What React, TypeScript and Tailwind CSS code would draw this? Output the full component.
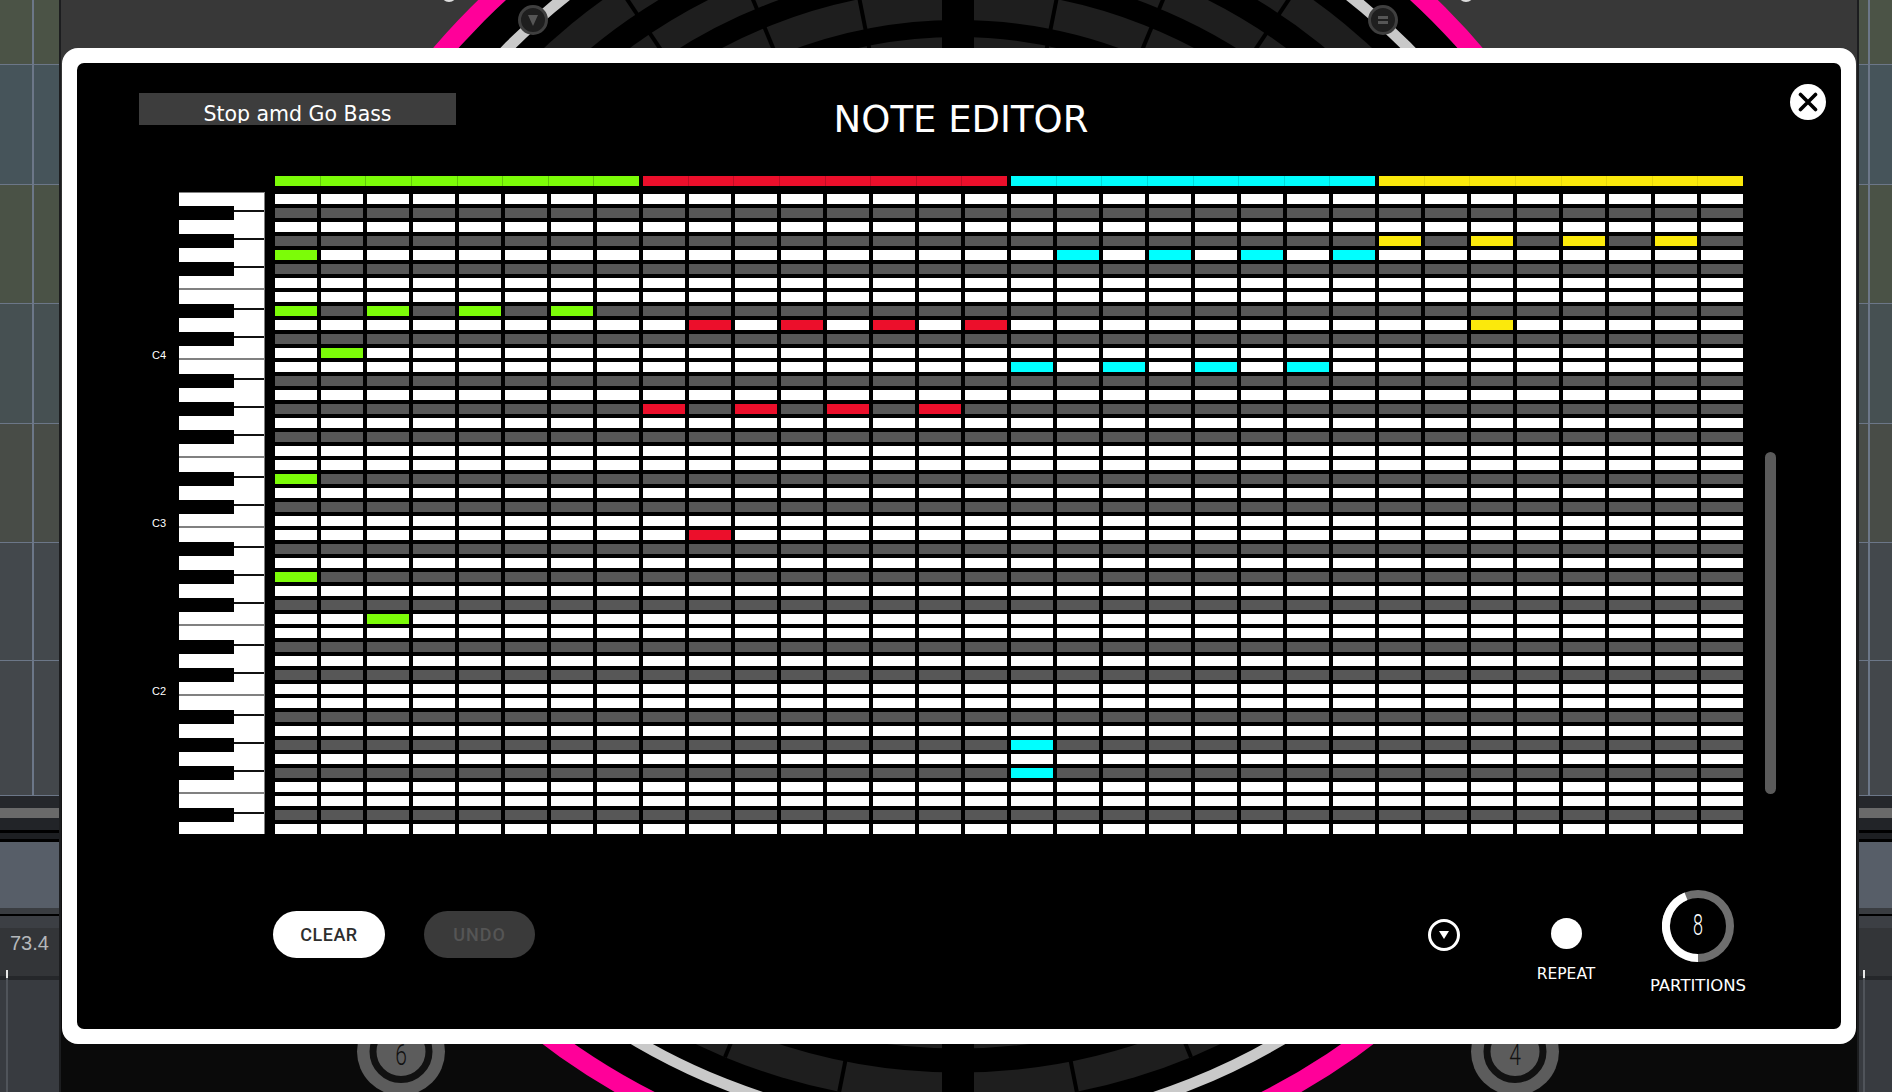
import React from "react";

const ROWS = 46;
const COLS = 32;

const GREEN = "bg-[#7cfc08]";
const RED = "bg-[#ec0f2b]";
const CYAN = "bg-[#00ffff]";
const YELLOW = "bg-[#fbe90c]";

// [row, col, colour]
const NOTES: [number, number, string][] = [
  [4, 0, GREEN], [8, 0, GREEN], [8, 2, GREEN], [8, 4, GREEN], [8, 6, GREEN],
  [11, 1, GREEN], [20, 0, GREEN], [27, 0, GREEN], [30, 2, GREEN],
  [9, 9, RED], [9, 11, RED], [9, 13, RED], [9, 15, RED],
  [15, 8, RED], [15, 10, RED], [15, 12, RED], [15, 14, RED], [24, 9, RED],
  [4, 17, CYAN], [4, 19, CYAN], [4, 21, CYAN], [4, 23, CYAN],
  [12, 16, CYAN], [12, 18, CYAN], [12, 20, CYAN], [12, 22, CYAN],
  [39, 16, CYAN], [41, 16, CYAN],
  [3, 24, YELLOW], [3, 26, YELLOW], [3, 28, YELLOW], [3, 30, YELLOW], [9, 26, YELLOW],
];

const HEADER_GROUPS = [
  { bg: "bg-[#7cfc08]", line: "border-[#62c80a]" },
  { bg: "bg-[#ec0f2b]", line: "border-[#c20d24]" },
  { bg: "bg-[#00ffff]", line: "border-[#00dcdc]" },
  { bg: "bg-[#fbe90c]", line: "border-[#e6d60c]" },
];

// semitones below the C at row 11
const semis = (row: number) => (((row - 11) % 12) + 12) % 12;
const isBlack = (row: number) => [2, 4, 6, 9, 11].includes(semis(row));
const octaveLabel = (row: number) => (row === 11 ? "C4" : row === 23 ? "C3" : row === 35 ? "C2" : "");

const STRIP_BANDS = [
  { h: "h-[65px]", bg: "bg-[#4b5346]" },
  { h: "h-[120px]", bg: "bg-[#46545a]" },
  { h: "h-[119px]", bg: "bg-[#4a5246]" },
  { h: "h-[120px]", bg: "bg-[#465052]" },
  { h: "h-[119px]", bg: "bg-[#484c47]" },
  { h: "h-[118px]", bg: "bg-[#43484c]" },
  { h: "h-[135px]", bg: "bg-[#43474b]" },
];

const Strip = ({ side }: { side: "left" | "right" }) => {
  const left = side === "left";
  return (
    <div className={`relative shrink-0 flex flex-col ${left ? "w-[61px] border-r-2 border-[#1c1d1f]" : "w-[35px] border-l-2 border-[#1c1d1f]"}`}>
      {STRIP_BANDS.map((b, i) => (
        <div key={i} className={`${b.h} ${b.bg} border-b border-[#6c7788] last:border-b-0`} />
      ))}
      <div className={`absolute top-0 h-[796px] w-[2px] bg-[#6c7788] ${left ? "left-[32px]" : "left-[9px]"}`} />
      <div className="h-[12px] bg-[#25272b]" />
      <div className="h-[10px] bg-[#6a6a6a]" />
      <div className="h-[12px] bg-[#222428]" />
      <div className="h-[3px] bg-black" />
      <div className="h-[6px] bg-[#1d1f22]" />
      <div className="h-[3px] bg-black" />
      <div className="h-[66px] bg-[#575e68]" />
      <div className="h-[6px] bg-[#3a3d41]" />
      <div className="h-[2px] bg-black" />
      <div className="h-[12px] bg-[#3c3f44]" />
      <div className="h-[48px] bg-[#333538] flex items-start">
        {left && (
          <span className="ml-[10px] mt-[3px] text-[20px] leading-[24px] text-[#b5b8bb] font-['Liberation_Sans',sans-serif]">
            73.4
          </span>
        )}
      </div>
      <div className="h-[4px] bg-[#25272a]" />
      <div className="flex-1 bg-[#383b40]" />
      <div className={`absolute top-[972px] h-[120px] w-[2px] bg-[#50545a] ${left ? "left-[6px]" : "left-[4px]"}`} />
      <div className={`absolute top-[970px] h-[8px] w-[2px] bg-[#e8e8e8] ${left ? "left-[6px]" : "left-[4px]"}`} />
    </div>
  );
};

const C = { x: 958, y: 494.5 };

const Dial = () => {
  const spokes: { x1: number; y1: number; x2: number; y2: number }[] = [];
  for (let k = 0; k < 32; k++) {
    const a = (k * 11.25 * Math.PI) / 180;
    spokes.push({
      x1: C.x + Math.sin(a) * 330,
      y1: C.y - Math.cos(a) * 330,
      x2: C.x + Math.sin(a) * 609,
      y2: C.y - Math.cos(a) * 609,
    });
  }
  return (
    <svg className="block w-full h-full" viewBox="61 0 1796 1092">
      <circle cx={C.x} cy={C.y} r={670} fill="#000" />
      <circle cx={C.x} cy={C.y} r={679.5} fill="none" stroke="#ff0099" strokeWidth={19} />
      <circle cx={C.x} cy={C.y} r={634} fill="none" stroke="#c9c9c9" strokeWidth={11} />
      <circle cx={C.x} cy={C.y} r={609} fill="#1e1e1e" />
      {spokes.map((s, i) => (
        <line key={i} {...s} stroke="#000" strokeWidth={4} />
      ))}
      <circle cx={C.x} cy={C.y} r={566} fill="none" stroke="#000" strokeWidth={24} />
      <circle cx={C.x} cy={C.y} r={515.5} fill="none" stroke="#000" strokeWidth={21} />
      <circle cx={C.x} cy={C.y} r={466} fill="none" stroke="#000" strokeWidth={17} />
      <rect x={942} y={0} width={32} height={1092} fill="#000" />

      <circle cx={449} cy={-6} r={8} fill="#ddd" />
      <circle cx={1466} cy={-6} r={8} fill="#ddd" />

      <circle cx={533} cy={20} r={13.5} fill="#1e1e1e" stroke="#3f3f3f" strokeWidth={3} />
      <path d="M528 15h10l-5 11z" fill="#555" />
      <circle cx={1383} cy={20} r={13.5} fill="#1e1e1e" stroke="#3f3f3f" strokeWidth={3} />
      <path d="M1378 16h10v3h-10zM1378 21h10v3h-10z" fill="#555" />

      {[401, 1515].map((x, i) => (
        <g key={x}>
          <circle cx={x} cy={1051.5} r={44} fill="#5c5c5c" />
          <circle cx={x} cy={1051.5} r={28} fill="#5c5c5c" stroke="#111" strokeWidth={7} />
          <text
            x={x}
            y={1065}
            textAnchor="middle"
            fontSize={30}
            fontWeight={300}
            fontFamily="Roboto, sans-serif"
            fill="#111"
            transform={`translate(${x} 0) scale(0.7 1) translate(${-x} 0)`}
          >
            {i === 0 ? "6" : "4"}
          </text>
        </g>
      ))}
    </svg>
  );
};

const Piano = () => (
  <div className="w-[86px] h-[642px] overflow-hidden border-t border-r border-[#808080] bg-white">
    <div className="-mt-px">
      {Array.from({ length: ROWS }, (_, r) => {
        const s = semis(r);
        if (isBlack(r)) {
          return (
            <div key={r} className="h-[14px] flex">
              <div className="w-[55px] bg-black" />
              <div className="flex-1 pt-[4px]">
                <div className="h-[2px] bg-[#111]" />
              </div>
            </div>
          );
        }
        const divider = s === 0 || s === 7;
        return <div key={r} className={`h-[14px] ${divider ? "border-b-2 border-[#808080]" : ""}`} />;
      })}
    </div>
  </div>
);

const NoteGrid = () => {
  const noteAt = (r: number, c: number) => NOTES.find((n) => n[0] === r && n[1] === c)?.[2];
  return (
    <div className="w-[1468px]">
      <div className="flex gap-x-1 h-[10px] mb-2">
        {HEADER_GROUPS.map((g, i) => (
          <div key={i} className={`w-[364px] flex ${g.bg}`}>
            {Array.from({ length: 8 }, (_, k) => (
              <div key={k} className={`flex-1 border-r last:border-r-0 ${g.line}`} />
            ))}
          </div>
        ))}
      </div>
      <div className="grid grid-cols-[repeat(32,42px)] auto-rows-[10px] gap-1">
        {Array.from({ length: ROWS }, (_, r) =>
          Array.from({ length: COLS }, (_, c) => (
            <div key={`${r}-${c}`} className={noteAt(r, c) ?? (isBlack(r) ? "bg-[#575757]" : "bg-white")} />
          ))
        )}
      </div>
    </div>
  );
};

const Partitions = () => (
  <div className="w-[96px] flex flex-col items-center">
    <div className="relative w-[72px] h-[72px]">
      <svg width="72" height="72" viewBox="0 0 72 72">
        <circle cx="36" cy="36" r="32" fill="none" stroke="#6e6e6e" strokeWidth="8" />
        <path d="M36 68A32 32 0 0 1 24 6.3" fill="none" stroke="#fff" strokeWidth="8" />
      </svg>
      <span className="absolute inset-0 flex items-center justify-center text-white text-[29px] font-light scale-x-[0.62] font-['Roboto',sans-serif]">
        8
      </span>
    </div>
    <span className="mt-[14px] text-[16.5px] leading-[20px] text-white whitespace-nowrap">PARTITIONS</span>
  </div>
);

export default function App() {
  return (
    <div className="relative w-[1892px] h-[1092px] overflow-hidden flex font-['DejaVu_Sans',sans-serif]">
      <Strip side="left" />
      <div className="flex-1 min-w-0 bg-[linear-gradient(#383838_5%,#0a0a0a_95%)]">
        <Dial />
      </div>
      <Strip side="right" />

      {/* Note editor dialog */}
      <div className="absolute left-[62px] top-[48px] w-[1794px] h-[996px] border-[15px] border-white rounded-[16px] bg-white">
        <div className="w-full h-full bg-black rounded-[7px] flex flex-col">
          {/* Header */}
          <div className="h-[113px] grid grid-cols-[1fr_auto_1fr] items-start shrink-0">
            <div className="ml-[62px] mt-[30px] w-[317px] h-[32px] bg-[#3d3d3d]">
              <div className="h-[30px] overflow-hidden text-center text-white text-[20.5px] leading-[28px] pt-[7px]">
                Stop amd Go Bass
              </div>
            </div>
            <h1 className="mt-[34px] ml-[4px] text-white text-[37px] leading-[46px] font-normal whitespace-nowrap">
              NOTE EDITOR
            </h1>
            <button className="justify-self-end mt-[21px] mr-[15px] w-[36px] h-[36px] rounded-full bg-white flex items-center justify-center">
              <svg width="20" height="20" viewBox="0 0 20 20">
                <path d="M2.5 2.5l15 15M17.5 2.5l-15 15" stroke="#000" strokeWidth="3.6" strokeLinecap="round" />
              </svg>
            </button>
          </div>

          {/* Piano roll */}
          <div className="flex shrink-0 ml-[62px] h-[658px]">
            <div className="w-[40px] h-[658px] overflow-hidden pt-[18px]">
              {Array.from({ length: ROWS }, (_, r) => (
                <div key={r} className="h-[14px] pr-[13px] text-right text-white text-[11px] leading-[14px] font-['Liberation_Sans',sans-serif] whitespace-nowrap">
                  {octaveLabel(r)}
                </div>
              ))}
            </div>
            <div className="mt-[16px] mr-[10px] h-[642px]">
              <Piano />
            </div>
            <NoteGrid />
            <div className="ml-[22px] mt-[276px] w-[11px] h-[342px] rounded-full bg-[#5a5a5a]" />
          </div>

          {/* Footer */}
          <div className="flex items-start mt-[56px]">
            <button className="ml-[196px] mt-[21px] w-[112px] h-[47px] rounded-full bg-white text-[#2e2e2e] text-[18px] font-medium tracking-[0.5px] font-['Roboto',sans-serif]">
              CLEAR
            </button>
            <button className="ml-[39px] mt-[21px] w-[111px] h-[47px] rounded-full bg-[#3a3a3a] text-[#555] text-[18px] font-medium tracking-[1px] font-['Roboto',sans-serif]">
              UNDO
            </button>
            <div className="ml-auto mr-[95px] flex items-start">
              <div className="mt-[29px] w-[32px] h-[32px] rounded-full border-[3.5px] border-white flex items-center justify-center">
                <svg width="12" height="10" viewBox="0 0 12 10">
                  <path d="M1 1h10l-5 8z" fill="#fff" />
                </svg>
              </div>
              <div className="ml-[76px] w-[60px] flex flex-col items-center mt-[28px]">
                <div className="w-[31px] h-[31px] rounded-full bg-white" />
                <span className="mt-[15px] text-[15.5px] leading-[20px] text-white whitespace-nowrap">REPEAT</span>
              </div>
              <div className="ml-[54px]">
                <Partitions />
              </div>
            </div>
          </div>
        </div>
      </div>
    </div>
  );
}
